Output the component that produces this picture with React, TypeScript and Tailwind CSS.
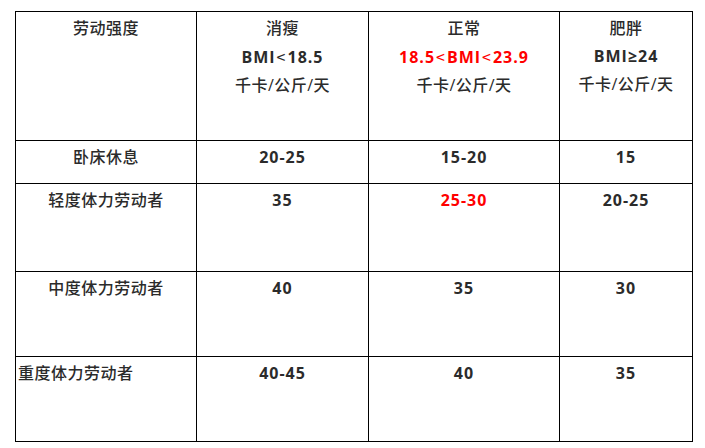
const rows = [
  { label: '卧床休息', thin: '20-25', normal: '15-20', fat: '15', h: 'h-[43px]' },
  { label: '轻度体力劳动者', thin: '35', normal: '25-30', fat: '20-25', h: 'h-[88px]', red: true },
  { label: '中度体力劳动者', thin: '40', normal: '35', fat: '30', h: 'h-[85px]' },
  { label: '重度体力劳动者', thin: '40-45', normal: '40', fat: '35', h: 'h-[85px]', left: true },
];

const cell = 'border border-black align-top text-center px-[2px] pt-[2px]';
const num = 'font-bold tracking-[1px]';

function Lt() {
  return (
    <span className="px-[1px] font-normal" style={{ fontFamily: '"Noto Sans CJK SC", sans-serif' }}>
      &lt;
    </span>
  );
}

export default function App() {
  return (
    <div
      className="bg-white w-[705px] h-[448px] pl-[15px] pt-[11px] text-[#2b2b2b] text-[16px] leading-[28px] tracking-[0.5px] font-medium"
      style={{ fontFamily: '"Open Sans", "Noto Sans CJK SC", sans-serif' }}
    >
      <table className="border-collapse table-fixed w-[677px]">
        <colgroup>
          <col className="w-[181px]" />
          <col className="w-[172px]" />
          <col className="w-[191px]" />
          <col className="w-[133px]" />
        </colgroup>
        <tbody>
          <tr className="h-[129px]">
            <td className={cell}>劳动强度</td>
            <td className={cell}>
              <div>消瘦</div>
              <div className={num}>
                BMI<Lt />18.5
              </div>
              <div>千卡/公斤/天</div>
            </td>
            <td className={cell}>
              <div>正常</div>
              <div className={`${num} text-[#ff0000]`}>
                18.5<Lt />BMI<Lt />23.9
              </div>
              <div>千卡/公斤/天</div>
            </td>
            <td className={cell}>
              <div>肥胖</div>
              <div className={num}>BMI≥24</div>
              <div>千卡/公斤/天</div>
            </td>
          </tr>
          {rows.map((r) => (
            <tr key={r.label} className={r.h}>
              <td className={`${cell} ${r.left ? '!text-left' : ''}`}>{r.label}</td>
              <td className={`${cell} ${num}`}>{r.thin}</td>
              <td className={`${cell} ${num} ${r.red ? 'text-[#ff0000]' : ''}`}>{r.normal}</td>
              <td className={`${cell} ${num}`}>{r.fat}</td>
            </tr>
          ))}
        </tbody>
      </table>
    </div>
  );
}
